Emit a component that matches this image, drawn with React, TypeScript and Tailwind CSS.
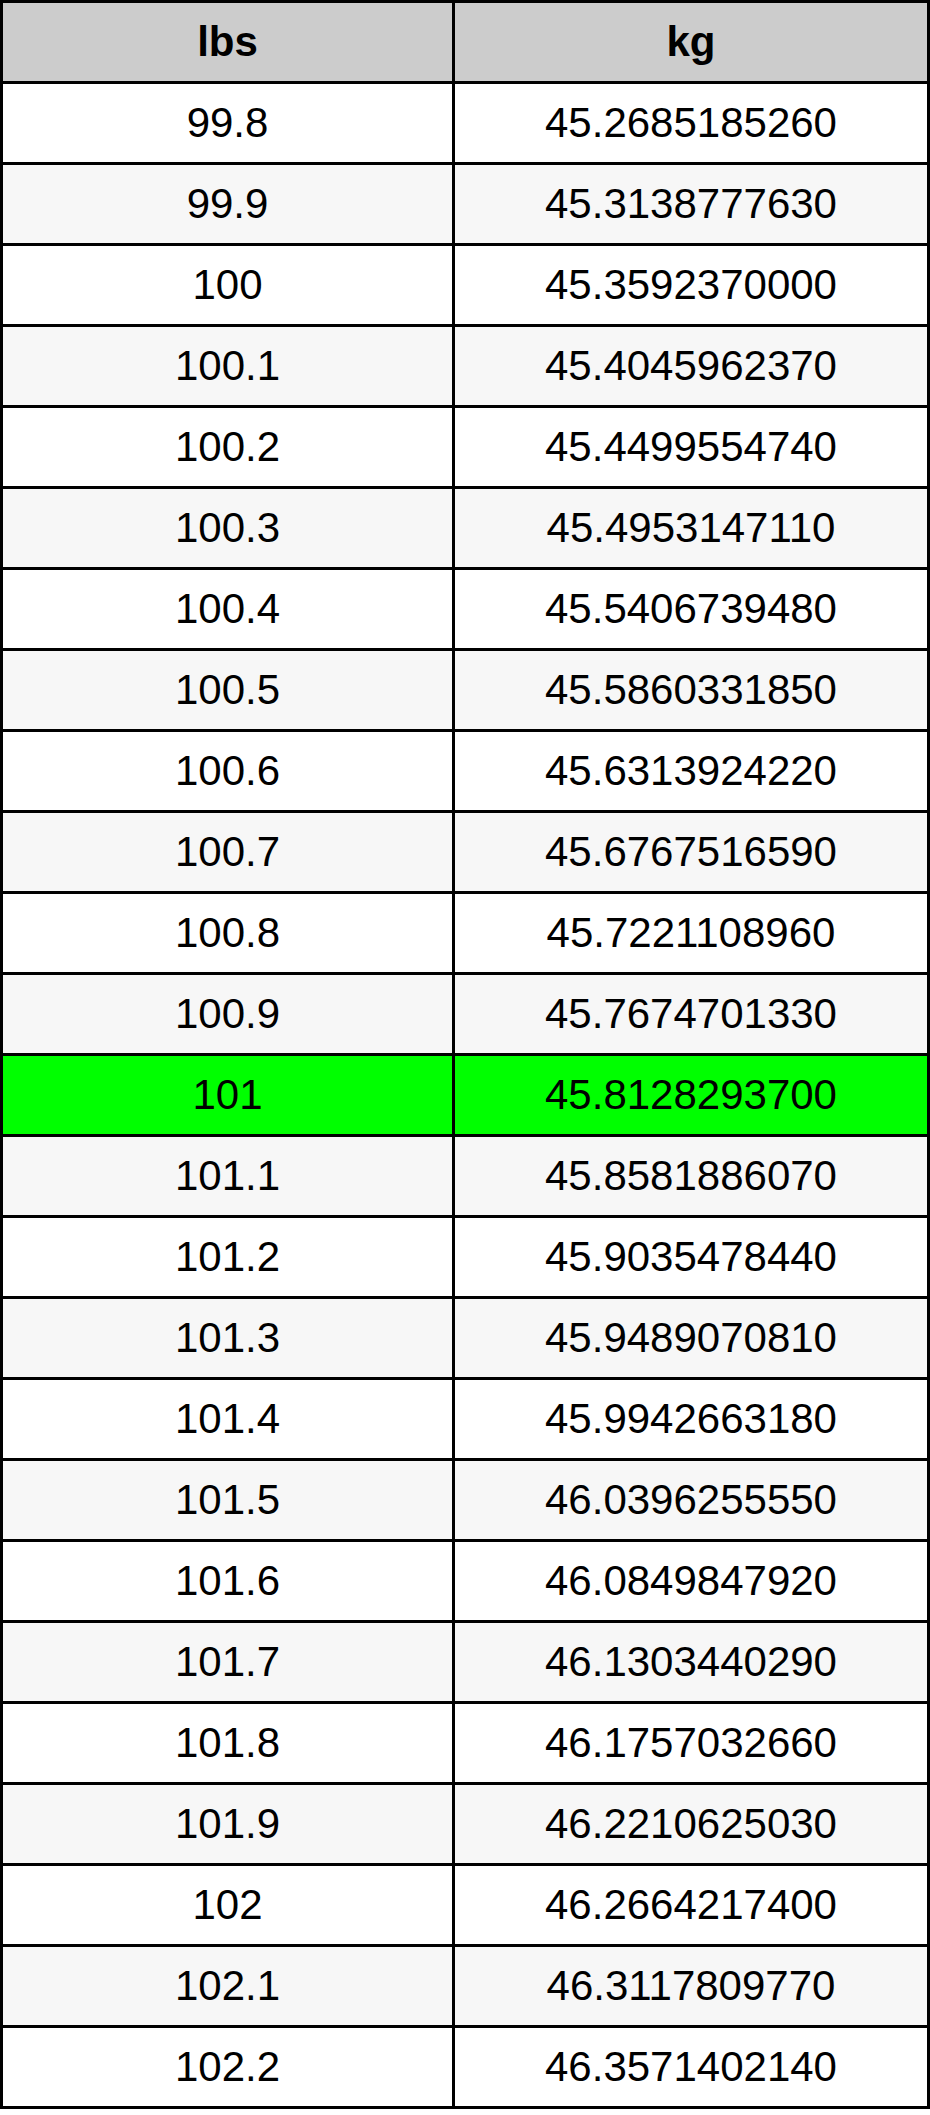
const rows: [string, string][] = [
  ["99.8", "45.2685185260"],
  ["99.9", "45.3138777630"],
  ["100", "45.3592370000"],
  ["100.1", "45.4045962370"],
  ["100.2", "45.4499554740"],
  ["100.3", "45.4953147110"],
  ["100.4", "45.5406739480"],
  ["100.5", "45.5860331850"],
  ["100.6", "45.6313924220"],
  ["100.7", "45.6767516590"],
  ["100.8", "45.7221108960"],
  ["100.9", "45.7674701330"],
  ["101", "45.8128293700"],
  ["101.1", "45.8581886070"],
  ["101.2", "45.9035478440"],
  ["101.3", "45.9489070810"],
  ["101.4", "45.9942663180"],
  ["101.5", "46.0396255550"],
  ["101.6", "46.0849847920"],
  ["101.7", "46.1303440290"],
  ["101.8", "46.1757032660"],
  ["101.9", "46.2210625030"],
  ["102", "46.2664217400"],
  ["102.1", "46.3117809770"],
  ["102.2", "46.3571402140"],
];

const cell = "flex h-[81px] items-center justify-center border-r-[3px] border-b-[3px] border-black";

export default function App() {
  return (
    <div className="min-h-screen bg-white font-['Liberation_Sans',Arial,sans-serif] text-[42px] leading-none text-black">
      <div className="grid w-[930px] grid-cols-[452px_475px] border-t-[3px] border-l-[3px] border-black">
        <div className={cell + " bg-[#cccccc] font-bold"}>lbs</div>
        <div className={cell + " bg-[#cccccc] font-bold"}>kg</div>
        {rows.map(([lbs, kg], i) => {
          const bg = lbs === "101" ? "bg-[#00ff00]" : i % 2 === 0 ? "bg-white" : "bg-[#f7f7f7]";
          return [
            <div key={lbs + "a"} className={cell + " " + bg}>{lbs}</div>,
            <div key={lbs + "b"} className={cell + " " + bg}>{kg}</div>,
          ];
        })}
      </div>
    </div>
  );
}
